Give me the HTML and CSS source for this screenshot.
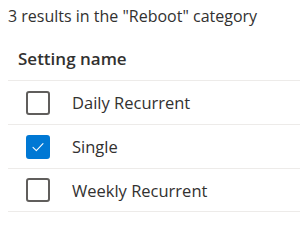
FILE: index.html
```html
<!DOCTYPE html>
<html lang="en">
<head>
    <meta charset="UTF-8">
    <title>Reboot settings</title>
    <link rel="stylesheet" href="styles.css">
</head>
<body>
    <div class="results">
        <p class="caption">3 results in the "Reboot" category</p>

        <div class="settings-list">
            <div class="list-header">Setting name</div>

            <div class="setting-row">
                <span class="checkbox"></span>
                <span class="setting-name">Daily Recurrent</span>
            </div>

            <div class="setting-row">
                <span class="checkbox checked">
                    <svg viewBox="0 0 24 24" width="16" height="16">
                        <path d="M4.5 12.5 L9.5 17.5 L19.5 7" fill="none" stroke="#fff" stroke-width="1.6" stroke-linecap="round" stroke-linejoin="round"/>
                    </svg>
                </span>
                <span class="setting-name">Single</span>
            </div>

            <div class="setting-row">
                <span class="checkbox"></span>
                <span class="setting-name">Weekly Recurrent</span>
            </div>
        </div>
    </div>
</body>
</html>
```

FILE: styles.css
```css
* {
    margin: 0;
    padding: 0;
    box-sizing: border-box;
}

body {
    font-family: 'Open Sans', 'Noto Sans', sans-serif;
    background: #ffffff;
    color: #323130;
}

.results {
    width: 300px;
}

/* Caption */
.caption {
    font-size: 16px;
    line-height: 24px;
    padding: 4px 8px;
}

/* List */
.settings-list {
    margin-left: 8px;
    margin-top: 4px;
}

.list-header {
    height: 44px;
    display: flex;
    align-items: center;
    padding-left: 10px;
    font-size: 17px;
    font-weight: 600;
}

.setting-row {
    height: 44px;
    display: flex;
    align-items: center;
    gap: 22px;
    padding-left: 18px;
    border-top: 1px solid #edebe9;
    font-size: 16.5px;
}

.setting-row:last-child {
    border-bottom: 1px solid #edebe9;
}

/* Checkbox */
.checkbox {
    width: 24px;
    height: 24px;
    border: 2px solid #605e5c;
    border-radius: 3px;
    display: flex;
    align-items: center;
    justify-content: center;
    flex-shrink: 0;
}

.checkbox.checked {
    background: #0078d4;
    border-color: #0078d4;
}
```
